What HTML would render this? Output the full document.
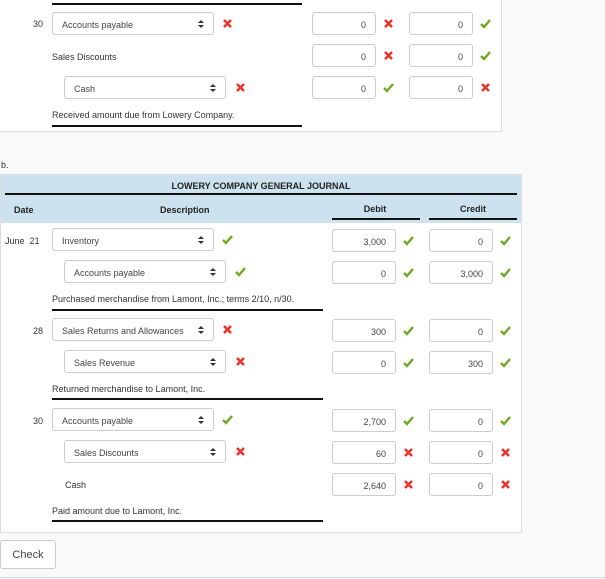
<!DOCTYPE html>
<html><head><style>
body{margin:0;width:605px;height:579px;background:#f9f9f9;font-family:"Liberation Sans",sans-serif;font-size:9px;color:#333;position:relative;overflow:hidden}
.a{position:absolute}
.box{position:absolute;background:#fff;border:1px solid #ddd;box-sizing:border-box}
.sel{position:absolute;height:23px;background:#fff;border:1px solid #ccc;border-radius:3px;box-sizing:border-box;padding-left:9px;padding-top:1px;line-height:22px;font-size:9px;color:#444}
.sel:after{content:"";position:absolute;right:9px;top:7px;width:0;height:0;border-left:3px solid transparent;border-right:3px solid transparent;border-bottom:3px solid #333}
.sel:before{content:"";position:absolute;right:9px;top:12px;width:0;height:0;border-left:3px solid transparent;border-right:3px solid transparent;border-top:3px solid #333}
.in{position:absolute;width:64px;height:23px;background:#fff;border:1px solid #ccc;border-radius:3px;box-sizing:border-box;text-align:right;padding-right:9px;padding-top:1px;line-height:22px;font-size:9px;color:#444}
.ok,.no{position:absolute;width:11px;height:11px}
.ln{position:absolute;height:1.5px;background:#111}
.t{position:absolute;font-size:9px;color:#333;white-space:nowrap}
</style></head><body>
<svg width="0" height="0" style="position:absolute"><defs>
<symbol id="c" viewBox="0 0 11 11"><path d="M1 6 L4 9 L10 2" stroke="#6fa820" stroke-width="2.4" fill="none"/></symbol>
<symbol id="x" viewBox="0 0 11 11"><path d="M2 2 L9 9 M9 2 L2 9" stroke="#e8342e" stroke-width="2.6" fill="none"/></symbol>
</defs></svg>

<div class="box" style="left:-1px;top:-2px;width:503px;height:134px"></div>
<div class="ln" style="left:52px;top:3px;width:250px"></div>
<div class="t" style="left:33px;top:19px">30</div>
<div class="sel" style="left:52px;top:12px;width:162px">Accounts payable</div>
<svg class="no" style="left:222px;top:18px"><use href="#x"/></svg>
<div class="t" style="left:52px;top:52px">Sales Discounts</div>
<div class="sel" style="left:64px;top:76px;width:162px">Cash</div>
<svg class="no" style="left:235px;top:82px"><use href="#x"/></svg>
<div class="t" style="left:52px;top:110px">Received amount due from Lowery Company.</div>
<div class="ln" style="left:52px;top:125px;width:250px"></div>
<div class="in" style="left:312px;top:12px">0</div><svg class="no" style="left:383px;top:18px"><use href="#x"/></svg>
<div class="in" style="left:409px;top:12px">0</div><svg class="ok" style="left:480px;top:18px"><use href="#c"/></svg>
<div class="in" style="left:312px;top:44px">0</div><svg class="no" style="left:383px;top:50px"><use href="#x"/></svg>
<div class="in" style="left:409px;top:44px">0</div><svg class="ok" style="left:480px;top:50px"><use href="#c"/></svg>
<div class="in" style="left:312px;top:76px">0</div><svg class="ok" style="left:383px;top:82px"><use href="#c"/></svg>
<div class="in" style="left:409px;top:76px">0</div><svg class="no" style="left:480px;top:82px"><use href="#x"/></svg>

<div class="t" style="left:1px;top:160px">b.</div>
<div class="box" style="left:0;top:174px;width:522px;height:359px"></div>
<div class="a" style="left:1px;top:175px;width:520px;height:48px;background:#cce2ee"></div>
<div class="t" style="left:0;width:522px;text-align:center;top:181px;font-weight:bold;color:#222">LOWERY COMPANY GENERAL JOURNAL</div>
<div class="ln" style="left:5px;top:193px;width:512px"></div>
<div class="t" style="left:14px;top:205px;font-weight:bold;color:#222">Date</div>
<div class="t" style="left:160px;top:205px;font-weight:bold;color:#222">Description</div>
<div class="t" style="left:332px;width:86px;text-align:center;top:204px;font-weight:bold;color:#222">Debit</div>
<div class="t" style="left:429px;width:88px;text-align:center;top:204px;font-weight:bold;color:#222">Credit</div>
<div class="ln" style="left:332px;top:218px;width:88px"></div>
<div class="ln" style="left:429px;top:218px;width:88px"></div>

<div class="t" style="left:5px;top:236px">June&nbsp;&nbsp;21</div>
<div class="sel" style="left:52px;top:228px;width:162px">Inventory</div><svg class="ok" style="left:222px;top:234px"><use href="#c"/></svg>
<div class="sel" style="left:64px;top:260px;width:162px">Accounts payable</div><svg class="ok" style="left:235px;top:266px"><use href="#c"/></svg>
<div class="t" style="left:52px;top:294px">Purchased merchandise from Lamont, Inc.; terms 2/10, n/30.</div>
<div class="ln" style="left:52px;top:309px;width:271px"></div>
<div class="in" style="left:332px;top:229px">3,000</div><svg class="ok" style="left:403px;top:235px"><use href="#c"/></svg>
<div class="in" style="left:429px;top:229px">0</div><svg class="ok" style="left:500px;top:235px"><use href="#c"/></svg>
<div class="in" style="left:332px;top:261px">0</div><svg class="ok" style="left:403px;top:267px"><use href="#c"/></svg>
<div class="in" style="left:429px;top:261px">3,000</div><svg class="ok" style="left:500px;top:267px"><use href="#c"/></svg>

<div class="t" style="left:33px;top:326px">28</div>
<div class="sel" style="left:52px;top:318px;width:162px">Sales Returns and Allowances</div><svg class="no" style="left:222px;top:324px"><use href="#x"/></svg>
<div class="sel" style="left:64px;top:350px;width:162px">Sales Revenue</div><svg class="no" style="left:235px;top:356px"><use href="#x"/></svg>
<div class="t" style="left:52px;top:384px">Returned merchandise to Lamont, Inc.</div>
<div class="ln" style="left:52px;top:398px;width:271px"></div>
<div class="in" style="left:332px;top:319px">300</div><svg class="ok" style="left:403px;top:325px"><use href="#c"/></svg>
<div class="in" style="left:429px;top:319px">0</div><svg class="ok" style="left:500px;top:325px"><use href="#c"/></svg>
<div class="in" style="left:332px;top:351px">0</div><svg class="ok" style="left:403px;top:357px"><use href="#c"/></svg>
<div class="in" style="left:429px;top:351px">300</div><svg class="ok" style="left:500px;top:357px"><use href="#c"/></svg>

<div class="t" style="left:33px;top:416px">30</div>
<div class="sel" style="left:52px;top:408px;width:162px">Accounts payable</div><svg class="ok" style="left:222px;top:414px"><use href="#c"/></svg>
<div class="sel" style="left:64px;top:440px;width:162px">Sales Discounts</div><svg class="no" style="left:235px;top:446px"><use href="#x"/></svg>
<div class="t" style="left:65px;top:480px">Cash</div>
<div class="t" style="left:52px;top:506px">Paid amount due to Lamont, Inc.</div>
<div class="ln" style="left:52px;top:520px;width:271px"></div>
<div class="in" style="left:332px;top:409px">2,700</div><svg class="ok" style="left:403px;top:415px"><use href="#c"/></svg>
<div class="in" style="left:429px;top:409px">0</div><svg class="ok" style="left:500px;top:415px"><use href="#c"/></svg>
<div class="in" style="left:332px;top:441px">60</div><svg class="no" style="left:403px;top:447px"><use href="#x"/></svg>
<div class="in" style="left:429px;top:441px">0</div><svg class="no" style="left:500px;top:447px"><use href="#x"/></svg>
<div class="in" style="left:332px;top:473px">2,640</div><svg class="no" style="left:403px;top:479px"><use href="#x"/></svg>
<div class="in" style="left:429px;top:473px">0</div><svg class="no" style="left:500px;top:479px"><use href="#x"/></svg>

<div class="a" style="left:0;top:540px;width:56px;height:29px;background:#fff;border:1px solid #ccc;border-radius:3px;box-sizing:border-box;text-align:center;line-height:28px;font-size:11px;color:#444">Check</div>
<div class="a" style="left:0;top:577px;width:605px;height:1px;background:#ddd"></div>
</body></html>
